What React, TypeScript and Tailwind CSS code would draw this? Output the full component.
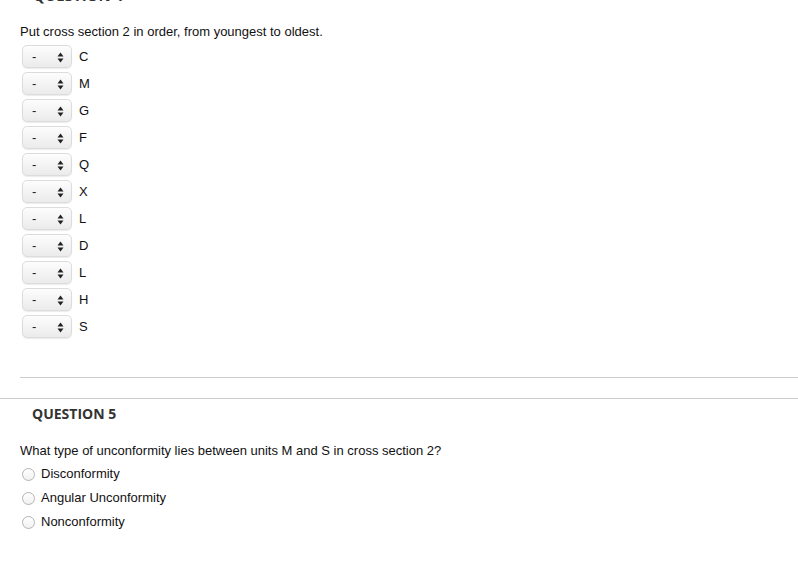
const units = ["C", "M", "G", "F", "Q", "X", "L", "D", "L", "H", "S"];
const choices = ["Disconformity", "Angular Unconformity", "Nonconformity"];

function FakeSelect() {
  return (
    <div className="relative flex h-[23px] w-[50px] items-center rounded-[5px] border border-[#dcdcdc] bg-gradient-to-b from-[#fdfdfd] to-[#ebebeb] pl-[9px] shadow-[0_1px_1px_rgba(0,0,0,0.08)]">
      <span className="text-[13px] leading-none text-[#222]">-</span>
      <svg className="absolute right-[7px] top-[6px]" width="7" height="11" viewBox="0 0 7 11">
        <path d="M3.5 0.5 L6.5 4.5 L0.5 4.5 Z" fill="#222" />
        <path d="M3.5 10.5 L6.5 6.5 L0.5 6.5 Z" fill="#222" />
      </svg>
    </div>
  );
}

export default function App() {
  return (
    <div className="h-[568px] w-[798px] overflow-hidden bg-white font-['Liberation_Sans',Arial,sans-serif] text-[#111]">
      {/* tail of previous question heading */}
      <div className="-mt-[13px] pl-[33px] font-['Open_Sans',sans-serif] text-[15px] font-bold leading-[16px] text-[#333]">
        QUESTION 4
      </div>

      <div className="pl-[20px] pt-[21px]">
        <p className="text-[13px] leading-[16px]">Put cross section 2 in order, from youngest to oldest.</p>
        <div className="mt-[5px] flex flex-col gap-[4px] pl-[2px]">
          {units.map((u, i) => (
            <div key={i} className="flex items-center gap-[7px]">
              <FakeSelect />
              <span className="text-[13px]">{u}</span>
            </div>
          ))}
        </div>
      </div>

      <div className="ml-[20px] mt-[39px] h-px bg-[#cdcdcd]" />
      <div className="mt-[20px] h-px bg-[#cdcdcd]" />

      <div className="pl-[32px] pt-[5px] font-['Open_Sans',sans-serif] text-[14px] font-bold leading-[20px] text-[#333]">
        QUESTION 5
      </div>

      <div className="pl-[20px] pt-[19px]">
        <p className="text-[13px] leading-[16px]">
          What type of unconformity lies between units M and S in cross section 2?
        </p>
        <div className="mt-[3px] flex flex-col">
          {choices.map((c) => (
            <label key={c} className="flex h-[24px] items-center gap-[6px] pl-[2px]">
              <span className="h-[13px] w-[13px] rounded-full border border-[#b5b5b5] bg-gradient-to-b from-white to-[#f1f1f1]" />
              <span className="text-[13px]">{c}</span>
            </label>
          ))}
        </div>
      </div>
    </div>
  );
}
